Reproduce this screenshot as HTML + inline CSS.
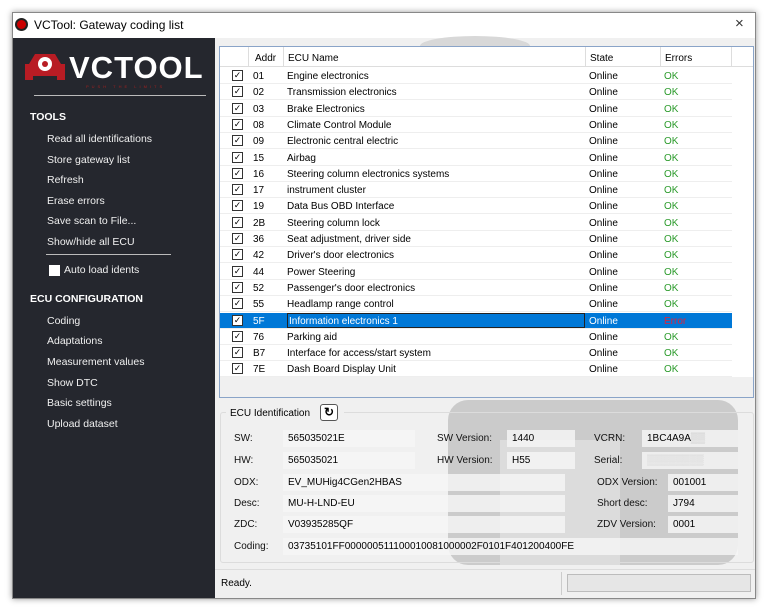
<!DOCTYPE html>
<html><head><style>
*{margin:0;padding:0;box-sizing:border-box}
body{width:768px;height:608px;background:#fff;font-family:"Liberation Sans",sans-serif;font-size:10px;color:#000;position:relative;overflow:hidden}
.a{position:absolute;white-space:nowrap}
#win{position:absolute;left:12px;top:12px;width:744px;height:587px;border:1px solid #888;box-shadow:0 0 6px rgba(0,0,0,.4);background:#f0f0f0}
#side{position:absolute;left:13px;top:38px;width:202px;height:560px;background:#25272e;color:#fff}
.si{position:absolute;left:34px;font-size:10.5px;color:#f0f0f0}
.sh{position:absolute;left:17px;font-weight:bold;font-size:10.5px}
.row{position:absolute;left:220px;width:512px;height:16px;background:#fff;border-bottom:1px solid #eee}
.row span{position:absolute;top:3px}
.cb{position:absolute;left:12px;top:2px;width:11px;height:11px;border:1px solid #333;background:#fff;font-size:9px;line-height:9px;text-align:center}
.ok{color:#2a9a2a}
.lab{position:absolute;color:#111}
.fld{position:absolute;height:17px;background:rgba(246,246,246,.8);padding:3px 5px}
</style></head><body>
<div id="win"></div>
<div class="a" style="left:13px;top:13px;width:742px;height:25px;background:#fff"></div>
<div class="a" style="left:15px;top:18px;width:13px;height:13px;border-radius:50%;background:#c00;border:2px solid #222"></div>
<div class="a" style="left:34px;top:18px;font-size:12px">VCTool: Gateway coding list</div>
<div class="a" style="left:735px;top:15px;font-size:15px;color:#333">×</div>

<div class="a" style="left:420px;top:36px;width:110px;height:20px;border-radius:50% 50% 0 0;background:#d8d8d8"></div>
<div class="a" style="left:448px;top:400px;width:290px;height:165px;border-radius:20px;background:#cbcbcb"></div>
<div class="a" style="left:500px;top:440px;width:120px;height:125px;background:#dcdcdc"></div>

<div id="side">
 <svg class="a" style="left:10px;top:12px" width="44" height="34" viewBox="0 0 44 34"><path d="M6 14 L12 4 H32 L38 14 H42 V30 H34 V26 H10 V30 H2 V14Z" fill="#b81c24"/><circle cx="22" cy="14" r="7" fill="#fff"/><circle cx="22" cy="14" r="3" fill="#b81c24"/></svg>
 <div class="a" style="left:56px;top:12px;font-size:31px;font-weight:bold;letter-spacing:1px;color:#fff">VCTOOL</div>
 <div class="a" style="left:73px;top:46px;font-size:4px;letter-spacing:3px;color:#a02020">PUSH THE LIMITS</div>
 <div class="a" style="left:21px;top:57px;width:172px;height:1px;background:#bbb"></div>
 <div class="sh" style="top:73px">TOOLS</div>
 <div class="si" style="top:95px">Read all identifications</div>
 <div class="si" style="top:116px">Store gateway list</div>
 <div class="si" style="top:136px">Refresh</div>
 <div class="si" style="top:157px">Erase errors</div>
 <div class="si" style="top:177px">Save scan to File...</div>
 <div class="si" style="top:198px">Show/hide all ECU</div>
 <div class="a" style="left:33px;top:216px;width:125px;height:1px;background:#bbb"></div>
 <div class="a" style="left:36px;top:227px;width:11px;height:11px;background:#fff"></div>
 <div class="si" style="left:51px;top:226px">Auto load idents</div>
 <div class="sh" style="top:255px">ECU CONFIGURATION</div>
 <div class="si" style="top:277px">Coding</div>
 <div class="si" style="top:297px">Adaptations</div>
 <div class="si" style="top:318px">Measurement values</div>
 <div class="si" style="top:339px">Show DTC</div>
 <div class="si" style="top:359px">Basic settings</div>
 <div class="si" style="top:380px">Upload dataset</div>
</div>

<div class="a" style="left:219px;top:46px;width:535px;height:352px;border:1px solid #8aa4c8;background:#f0f0f0"></div>
<div class="a" style="left:220px;top:47px;width:533px;height:330px;background:#fff"></div>
<div class="a" style="left:220px;top:47px;width:533px;height:20px;background:#fff;border-bottom:1px solid #ddd"></div>
<div class="a" style="left:248px;top:47px;width:1px;height:20px;background:#ddd"></div>
<div class="a" style="left:283px;top:47px;width:1px;height:20px;background:#ddd"></div>
<div class="a" style="left:585px;top:47px;width:1px;height:20px;background:#ddd"></div>
<div class="a" style="left:660px;top:47px;width:1px;height:20px;background:#ddd"></div>
<div class="a" style="left:731px;top:47px;width:1px;height:20px;background:#ddd"></div>
<div class="a" style="left:255px;top:53px">Addr</div>
<div class="a" style="left:288px;top:53px">ECU Name</div>
<div class="a" style="left:590px;top:53px">State</div>
<div class="a" style="left:665px;top:53px">Errors</div>
<div id="rows"></div>
<script>
var d=[["01","Engine electronics"],["02","Transmission electronics"],["03","Brake Electronics"],["08","Climate Control Module"],["09","Electronic central electric"],["15","Airbag"],["16","Steering column electronics systems"],["17","instrument cluster"],["19","Data Bus OBD Interface"],["2B","Steering column lock"],["36","Seat adjustment, driver side"],["42","Driver's door electronics"],["44","Power Steering"],["52","Passenger's door electronics"],["55","Headlamp range control"],["5F","Information electronics 1"],["76","Parking aid"],["B7","Interface for access/start system"],["7E","Dash Board Display Unit"]];
var h="";
d.forEach(function(r,i){var t=68+i*16.3;var sel=r[0]=="5F";
h+='<div class="row" style="top:'+t+'px;'+(sel?'background:#0078d7;color:#fff':'')+'"><div class="cb" style="color:#000">✓</div><span style="left:33px">'+r[0]+'</span><span style="left:67px;'+(sel?'top:0;height:15px;width:298px;border:1px solid #222;padding:2px 0 0 1px':'')+'">'+r[1]+'</span><span style="left:369px">Online</span><span style="left:444px;'+(sel?'color:#e0223a':'')+'" class="'+(sel?'':'ok')+'">'+(sel?'Error':'OK')+'</span></div>';});
document.getElementById("rows").innerHTML=h;
</script>

<div class="a" style="left:220px;top:412px;width:534px;height:151px;border:1px solid #dcdcdc;border-radius:3px"></div>
<div class="a" style="left:226px;top:405px;width:118px;height:16px;background:#f0f0f0"></div>
<div class="a" style="left:230px;top:408px">ECU Identification</div>
<div class="a" style="left:320px;top:404px;width:18px;height:17px;border:1px solid #555;border-radius:3px;background:#fff;text-align:center;font-weight:bold;font-size:12px;line-height:15px">↻</div>

<div class="lab" style="left:234px;top:433px">SW:</div><div class="fld" style="left:283px;top:430px;width:132px">565035021E</div>
<div class="lab" style="left:437px;top:433px">SW Version:</div><div class="fld" style="left:507px;top:430px;width:68px">1440</div>
<div class="lab" style="left:594px;top:433px">VCRN:</div><div class="fld" style="left:642px;top:430px;width:96px">1BC4A9A<span style="color:#bbb">▒▒</span></div>
<div class="lab" style="left:234px;top:455px">HW:</div><div class="fld" style="left:283px;top:452px;width:132px">565035021</div>
<div class="lab" style="left:437px;top:455px">HW Version:</div><div class="fld" style="left:507px;top:452px;width:68px">H55</div>
<div class="lab" style="left:594px;top:455px">Serial:</div><div class="fld" style="left:642px;top:452px;width:96px;color:#ccc">▒▒▒▒▒▒▒▒</div>
<div class="lab" style="left:234px;top:477px">ODX:</div><div class="fld" style="left:283px;top:474px;width:282px">EV_MUHig4CGen2HBAS</div>
<div class="lab" style="left:597px;top:477px">ODX Version:</div><div class="fld" style="left:668px;top:474px;width:70px">001001</div>
<div class="lab" style="left:234px;top:498px">Desc:</div><div class="fld" style="left:283px;top:495px;width:282px">MU-H-LND-EU</div>
<div class="lab" style="left:597px;top:498px">Short desc:</div><div class="fld" style="left:668px;top:495px;width:70px">J794</div>
<div class="lab" style="left:234px;top:519px">ZDC:</div><div class="fld" style="left:283px;top:516px;width:282px">V03935285QF</div>
<div class="lab" style="left:597px;top:519px">ZDV Version:</div><div class="fld" style="left:668px;top:516px;width:70px">0001</div>
<div class="lab" style="left:234px;top:541px">Coding:</div><div class="fld" style="left:283px;top:538px;width:455px">03735101FF000000511100010081000002F0101F401200400FE</div>

<div class="a" style="left:215px;top:569px;width:540px;height:29px;background:#f0f0f0;border-top:1px solid #dcdcdc"></div>
<div class="a" style="left:221px;top:578px">Ready.</div>
<div class="a" style="left:561px;top:572px;width:1px;height:23px;background:#ccc"></div>
<div class="a" style="left:567px;top:574px;width:184px;height:18px;border:1px solid #bcbcbc;background:#e6e6e6"></div>
</body></html>
